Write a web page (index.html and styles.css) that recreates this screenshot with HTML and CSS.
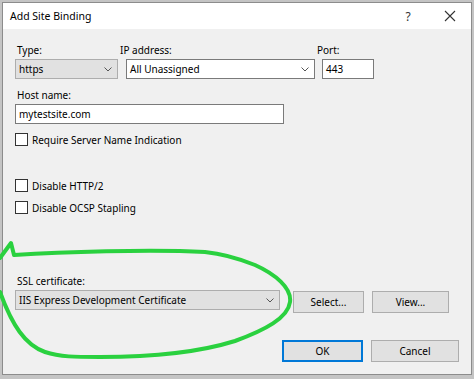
FILE: index.html
```html
<!DOCTYPE html>
<html lang="en">

<head>
  <meta charset="UTF-8">
  <title>Add Site Binding</title>
  <link rel="stylesheet" href="styles.css">
</head>

<body>
  <!-- The dialog window -->
  <div class="dialog">

    <!-- Title bar with help and close buttons -->
    <div class="titlebar">
      <span class="title">Add Site Binding</span>
      <span class="title-btn">?</span>
      <span class="title-btn">
        <svg width="12" height="12" viewBox="0 0 12 12"><path d="M1 1 L11 11 M11 1 L1 11" stroke="#333" stroke-width="1.1" fill="none"/></svg>
      </span>
    </div>

    <div class="content">

      <!-- Type / IP address / Port -->
      <div class="top-row">
        <div class="field">
          <label>Type:</label>
          <div class="combo combo-gray type-combo">
            <span>https</span>
            <svg class="chev" width="8" height="5" viewBox="0 0 8 5"><path d="M0.5 0.5 L4 4 L7.5 0.5" stroke="#555" fill="none"/></svg>
          </div>
        </div>
        <div class="field">
          <label>IP address:</label>
          <div class="combo ip-combo">
            <span>All Unassigned</span>
            <svg class="chev" width="8" height="5" viewBox="0 0 8 5"><path d="M0.5 0.5 L4 4 L7.5 0.5" stroke="#555" fill="none"/></svg>
          </div>
        </div>
        <div class="field">
          <label>Port:</label>
          <div class="textbox port-box">443</div>
        </div>
      </div>

      <!-- Host name -->
      <div class="field host-field">
        <label>Host name:</label>
        <div class="textbox host-box">mytestsite.com</div>
      </div>

      <!-- Checkboxes -->
      <div class="check check-sni"><span class="box"></span>Require Server Name Indication</div>
      <div class="check check-http2"><span class="box"></span>Disable HTTP/2</div>
      <div class="check check-ocsp"><span class="box"></span>Disable OCSP Stapling</div>

      <!-- SSL certificate -->
      <div class="ssl-row">
        <div class="field">
          <label class="ssl-label">SSL certificate:</label>
          <div class="combo combo-gray ssl-combo">
            <span>IIS Express Development Certificate</span>
            <svg class="chev" width="8" height="5" viewBox="0 0 8 5"><path d="M0.5 0.5 L4 4 L7.5 0.5" stroke="#555" fill="none"/></svg>
          </div>
        </div>
        <div class="btn btn-select">Select...</div>
        <div class="btn btn-view">View...</div>
      </div>

      <!-- OK / Cancel -->
      <div class="actions">
        <div class="btn btn-ok">OK</div>
        <div class="btn btn-cancel">Cancel</div>
      </div>
    </div>
  </div>

  <!-- The green hand-drawn circle lies over the dialog -->
  <svg class="scribble" width="474" height="379" viewBox="0 0 474 379">
    <path d="M0 258 L11 243 L14 255 C60 252, 150 249, 205 252 C225 254, 240 259, 255 265 C275 274, 292 288, 290 302 C288 318, 265 330, 235 341 C200 352, 150 357, 100 357 C75 357, 60 357, 45 352 C25 345, 12 325, 0 292"
      stroke="#2ad13f" stroke-width="4" fill="none" stroke-linecap="round" stroke-linejoin="round"/>
  </svg>
</body>

</html>
```

FILE: styles.css
```css
/* Page background behind the dialog */
body {
  margin: 0;
  padding: 2px 0 0 2px;
  width: 474px;
  height: 379px;
  box-sizing: border-box;
  background-color: #c4c4c4;
  font-family: "Noto Sans", Arial, sans-serif;
  font-size: 10px;
  color: #000;
  overflow: hidden;
}

/* The dialog window itself */
.dialog {
  width: 470px;
  height: 373px;
  box-sizing: border-box;
  border: 1px solid #8c8c8c;
  background-color: #f0f0f0;
}

/* Title bar */
.titlebar {
  height: 26px;
  display: flex;
  align-items: center;
  background-color: #fff;
}

.title {
  flex: 1;
  padding-left: 7px;
  font-size: 10.5px;
}

.title-btn {
  width: 42px;
  height: 26px;
  display: flex;
  align-items: center;
  justify-content: center;
  font-size: 12px;
  color: #333;
}

/* Body of the dialog */
.content {
  padding: 14px 12px 0 12px;
}

.top-row {
  display: flex;
}

.field label {
  display: block;
  height: 14px;
  line-height: 14px;
  padding-left: 2px;
  margin-bottom: 2px;
}

/* Combo boxes and text boxes */
.combo,
.textbox {
  height: 20px;
  box-sizing: border-box;
  display: flex;
  align-items: center;
  padding-left: 3px;
}

.combo span {
  flex: 1;
}

.combo .chev {
  margin-right: 5px;
}

.combo-gray {
  background-color: #e1e1e1;
  border: 1px solid #adadad;
}

.ip-combo,
.textbox {
  background-color: #fff;
  border: 1px solid #7a7a7a;
}

.type-combo {
  width: 103px;
}

.ip-combo {
  width: 189px;
  margin-left: 8px;
}

.port-box {
  width: 52px;
  margin-left: 7px;
}

.host-field {
  margin-top: 9px;
}

.host-box {
  width: 269px;
}

/* Check boxes */
.check {
  display: flex;
  align-items: center;
  height: 13px;
}

.check .box {
  width: 13px;
  height: 13px;
  box-sizing: border-box;
  border: 1px solid #333;
  background-color: #fff;
  margin-right: 4px;
}

.check-sni {
  margin-top: 9px;
}

.check-http2 {
  margin-top: 33px;
}

.check-ocsp {
  margin-top: 9px;
}

/* SSL certificate row */
.ssl-row {
  display: flex;
  align-items: flex-end;
  margin-top: 60px;
}

.ssl-label {
  margin-bottom: 2px;
}

.ssl-combo {
  width: 265px;
}

/* Buttons */
.btn {
  height: 22px;
  box-sizing: border-box;
  display: flex;
  align-items: center;
  justify-content: center;
  background-color: #e1e1e1;
  border: 1px solid #adadad;
}

.btn-select {
  width: 71px;
  margin-left: 13px;
  margin-bottom: -3px;
}

.btn-view {
  width: 77px;
  margin-left: 8px;
  margin-bottom: -3px;
}

.actions {
  display: flex;
  justify-content: flex-end;
  margin-top: 30px;
}

.btn-ok {
  width: 81px;
  border: 2px solid #0078d7;
}

.btn-cancel {
  width: 88px;
  margin-left: 8px;
}

/* Overlay with the hand-drawn marker */
.scribble {
  position: absolute;
  top: 0;
  left: 0;
  pointer-events: none;
}
```
